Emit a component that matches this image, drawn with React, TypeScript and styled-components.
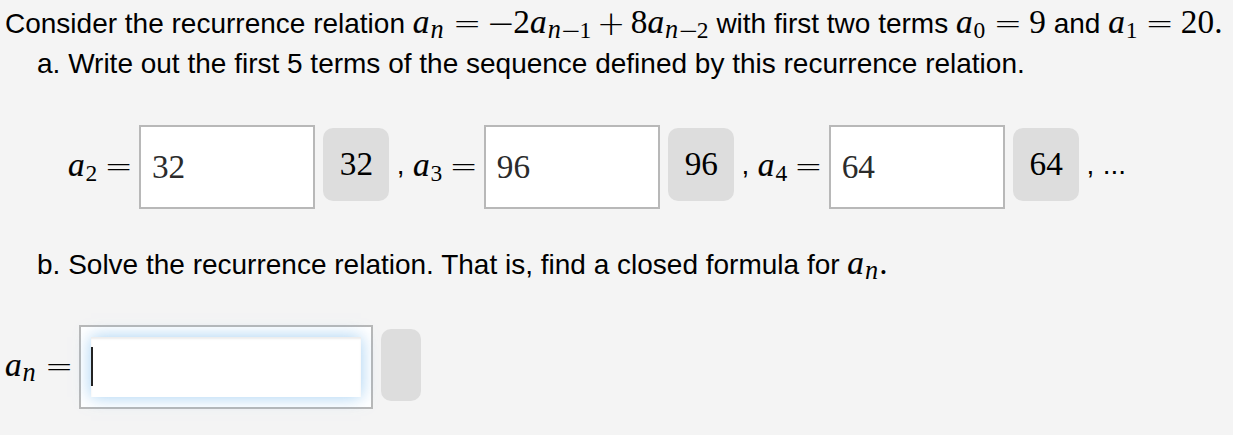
// Vendor imports
import React from 'react';
import styled, { createGlobalStyle, css } from 'styled-components';

const GlobalStyle = createGlobalStyle`
  body {
    margin: 0;
    background: #f4f4f4;
    color: #000;
    font-family: 'Liberation Sans', Arial, sans-serif;
    font-size: 28px;
  }
`;

const mathFont = css`
  font-family: 'Liberation Serif', 'Times New Roman', serif;
`;

const Page = styled.main`
  box-sizing: border-box;
  display: flex;
  flex-direction: column;
  width: 1233px;
  height: 435px;
  overflow: hidden;
`;

const Line = styled.p<{ indent: number; top: number }>`
  display: flex;
  align-items: baseline;
  box-sizing: border-box;
  height: 40px;
  margin: ${(props) => props.top}px 0 0;
  padding-left: ${(props) => props.indent}px;
  line-height: 40px;
  white-space: pre;
`;

const AnswerRow = styled.div<{ indent: number; top: number }>`
  display: flex;
  align-items: center;
  height: 84px;
  margin-top: ${(props) => props.top}px;
  padding-left: ${(props) => props.indent}px;
  white-space: pre;
`;

const Math = styled.span<{ lift?: number }>`
  ${mathFont}
  display: inline-flex;
  align-items: baseline;
  padding-bottom: ${(props) => props.lift ?? 0}px;
  font-size: 33.3px;
`;

const Letter = styled.i`
  width: 0.529em;
  -webkit-text-stroke: 0.2px currentColor;
`;

const Sub = styled.sub<{ gap?: number }>`
  position: relative;
  top: 5px;
  display: inline-flex;
  align-items: baseline;
  padding-right: ${(props) => props.gap ?? 0}px;
  font-size: 23.5px;
  line-height: 1;
  vertical-align: baseline;

  > i {
    width: 0.54em;
    font-size: 1.12em;
  }
`;

// Operators need the thin strokes of a light math face
const Operator = styled.span<{ space?: number }>`
  display: inline-flex;
  justify-content: center;
  width: 0.748em;
  margin: 0 ${(props) => props.space ?? 0}em;
  font-family: 'DejaVu Sans Light', 'DejaVu Sans', sans-serif;
  font-weight: 200;

  > span {
    position: relative;
    top: 0.07em;
    font-size: 1.03em;
    line-height: 1;
  }

  ${Sub} & > span {
    top: 0.04em;
    -webkit-text-stroke: 0.2px currentColor;
  }
`;

const Punctuation = styled.span<{ width: number }>`
  box-sizing: border-box;
  width: ${(props) => props.width}px;
  padding: 0 0 4px;
`;

const FieldInput = styled.input`
  ${mathFont}
  box-sizing: border-box;
  width: 176px;
  height: 84px;
  margin: 0 8px 0 0;
  padding: 0 11px;
  border: 2px solid #b8b8b8;
  border-radius: 0;
  background: #fff;
  color: #2b2b2b;
  font-size: 33.3px;
  outline: none;
`;

const Preview = styled.output<{ width: number; height: number }>`
  ${mathFont}
  display: flex;
  align-items: center;
  justify-content: center;
  box-sizing: border-box;
  width: ${(props) => props.width}px;
  height: ${(props) => props.height}px;
  margin-bottom: 5px;
  padding: 0 0 2px 1px;
  border-radius: 10px;
  background: #ddd;
  font-size: 33.3px;
`;

const FocusedField = styled.div`
  box-sizing: border-box;
  width: 294px;
  height: 84px;
  margin-right: 8px;
  padding: 10px;
  border: 2px solid #b8b8b8;
  background: #fff;
`;

const EditArea = styled.div`
  display: flex;
  align-items: center;
  height: 60px;
  box-shadow: inset 0 2px 2px rgba(0, 0, 0, 0.075),
    0 0 16px rgba(102, 175, 233, 0.6);
`;

const Caret = styled.span`
  width: 2px;
  height: 39px;
  margin-bottom: 2px;
  background: #222;
`;

function Op({ children, space }: { children: string; space?: number }) {
  return (
    <Operator space={space}>
      <span>{children}</span>
    </Operator>
  );
}

function Term({ index, gap }: { index: React.ReactNode; gap?: number }) {
  return (
    <>
      <Letter>a</Letter>
      <Sub gap={gap}>{index}</Sub>
    </>
  );
}

const N = <i>n</i>;

function Shifted({ by }: { by: number }) {
  return (
    <Term
      index={
        <>
          {N}
          <Op>−</Op>
          {by}
        </>
      }
    />
  );
}

const answers = [
  { index: 2, value: '32' },
  { index: 3, value: '96' },
  { index: 4, value: '64' },
];

export default function App() {
  return (
    <>
      <GlobalStyle />
      <Page>
        <Line indent={5} top={2}>
          {'Consider the recurrence relation '}
          <Math>
            <Term index={N} gap={1} />
            <Op space={0.27}>=</Op>
            <Op>−</Op>2
            <Shifted by={1} />
            <Op space={0.222}>+</Op>8
            <Shifted by={2} />
          </Math>
          {' with first two terms '}
          <Math>
            <Term index={0} gap={1} />
            <Op space={0.27}>=</Op>9
          </Math>
          {' and '}
          <Math>
            <Term index={1} gap={1} />
            <Op space={0.262}>=</Op>
            20.
          </Math>
        </Line>
        <Line indent={37} top={2}>
          a. Write out the first 5 terms of the sequence defined by this
          recurrence relation.
        </Line>

        <AnswerRow indent={68} top={41}>
          {answers.map(({ index, value }) => (
            <React.Fragment key={index}>
              <Math lift={5}>
                <Term index={index} gap={1} />
                <Op space={0.235}>=</Op>
              </Math>
              <FieldInput defaultValue={value} aria-label={`a${index}`} />
              <Preview width={66} height={73}>
                {value}
              </Preview>
              <Punctuation width={24}>{' , '}</Punctuation>
            </React.Fragment>
          ))}
          <Punctuation width={24}>...</Punctuation>
        </AnswerRow>

        <Line indent={37} top={34}>
          {'b. Solve the recurrence relation. That is, find a closed formula for '}
          <Math>
            <Term index={N} />.
          </Math>
        </Line>

        <AnswerRow indent={5} top={42}>
          <Math lift={5}>
            <Term index={N} gap={2} />
            <Op space={0.235}>=</Op>
          </Math>
          <FocusedField>
            <EditArea>
              <Caret />
            </EditArea>
          </FocusedField>
          <Preview width={40} height={72} />
        </AnswerRow>
      </Page>
    </>
  );
}
